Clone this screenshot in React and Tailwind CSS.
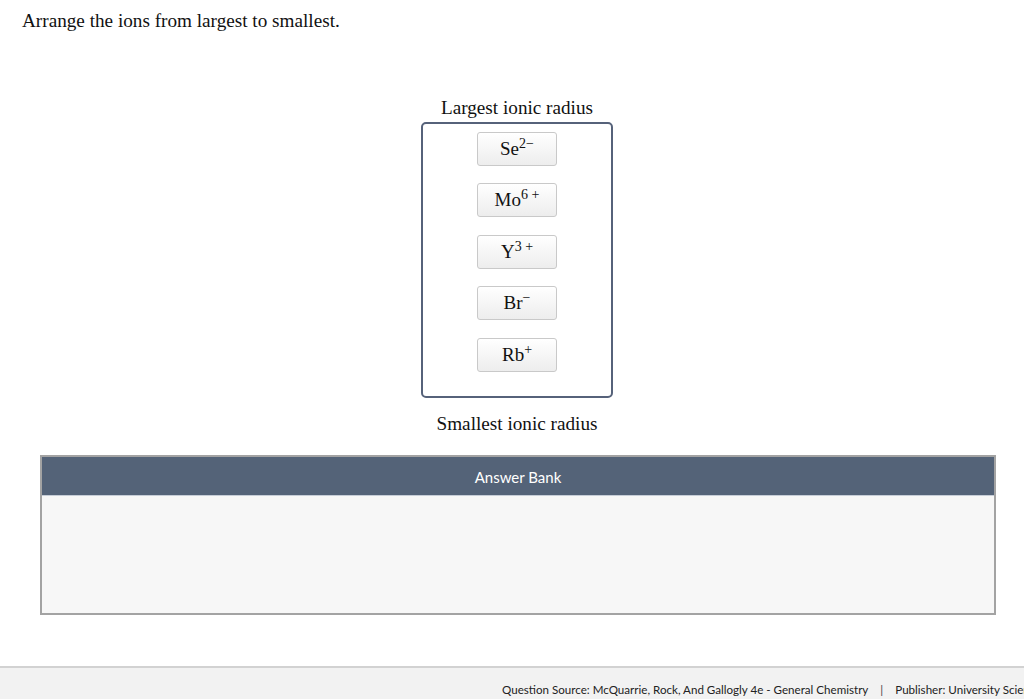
const ions = [
  { base: "Se", sup: "2−" },
  { base: "Mo", sup: "6 +" },
  { base: "Y", sup: "3 +" },
  { base: "Br", sup: "−" },
  { base: "Rb", sup: "+" },
];

function IonTile({ base, sup }) {
  return (
    <div className="w-[80px] h-[34px] flex items-center justify-center rounded-[3px] border border-[#c9c9c9] bg-gradient-to-b from-white to-[#ededed] text-[19px] text-[#111]">
      <span>
        {base}
        <sup className="text-[14px] relative -top-[7px]">{sup}</sup>
      </span>
    </div>
  );
}

export default function App() {
  return (
    <div className="w-[1024px] h-[699px] bg-white flex flex-col overflow-hidden font-['Liberation_Serif',serif]">
      {/* Prompt */}
      <p className="pl-[22px] pt-[7px] text-[19.2px] text-[#111]">Arrange the ions from largest to smallest.</p>

      {/* Ordering box */}
      <div className="flex flex-col items-center mt-[62px] ml-[10px]">
        <div className="text-[19.2px] text-[#111] leading-[20px]">Largest ionic radius</div>
        <div className="mt-[4px] w-[192px] border-2 border-[#56627a] rounded-[5px] flex flex-col items-center gap-[17.5px] pt-[8px] pb-[24px]">
          {ions.map((ion) => (
            <IonTile key={ion.base} {...ion} />
          ))}
        </div>
        <div className="mt-[16px] text-[19.2px] text-[#111] leading-[20px]">Smallest ionic radius</div>
      </div>

      {/* Answer bank */}
      <div className="mx-[40px] mt-[21px] w-[956px] h-[160px] border-2 border-[#a3a3a3] flex flex-col">
        <div className="h-[39px] pt-[2px] bg-[#546378] border-b border-[#c6cdd7] flex items-center justify-center text-white text-[15px] font-['Lato',sans-serif]">
          Answer Bank
        </div>
        <div className="flex-1 bg-[#f7f7f7]"></div>
      </div>

      {/* Footer */}
      <div className="mt-auto h-[33px] bg-[#f2f2f2] border-t-2 border-[#d2d2d2] flex items-center pl-[502px] pt-[12px] whitespace-nowrap text-[11.6px] text-[#222] font-['Lato',sans-serif]">
        <span>Question Source: McQuarrie, Rock, And Gallogly 4e - General Chemistry</span>
        <span className="mx-[12px] text-[#444]">|</span>
        <span>Publisher: University Science Books</span>
      </div>
    </div>
  );
}
